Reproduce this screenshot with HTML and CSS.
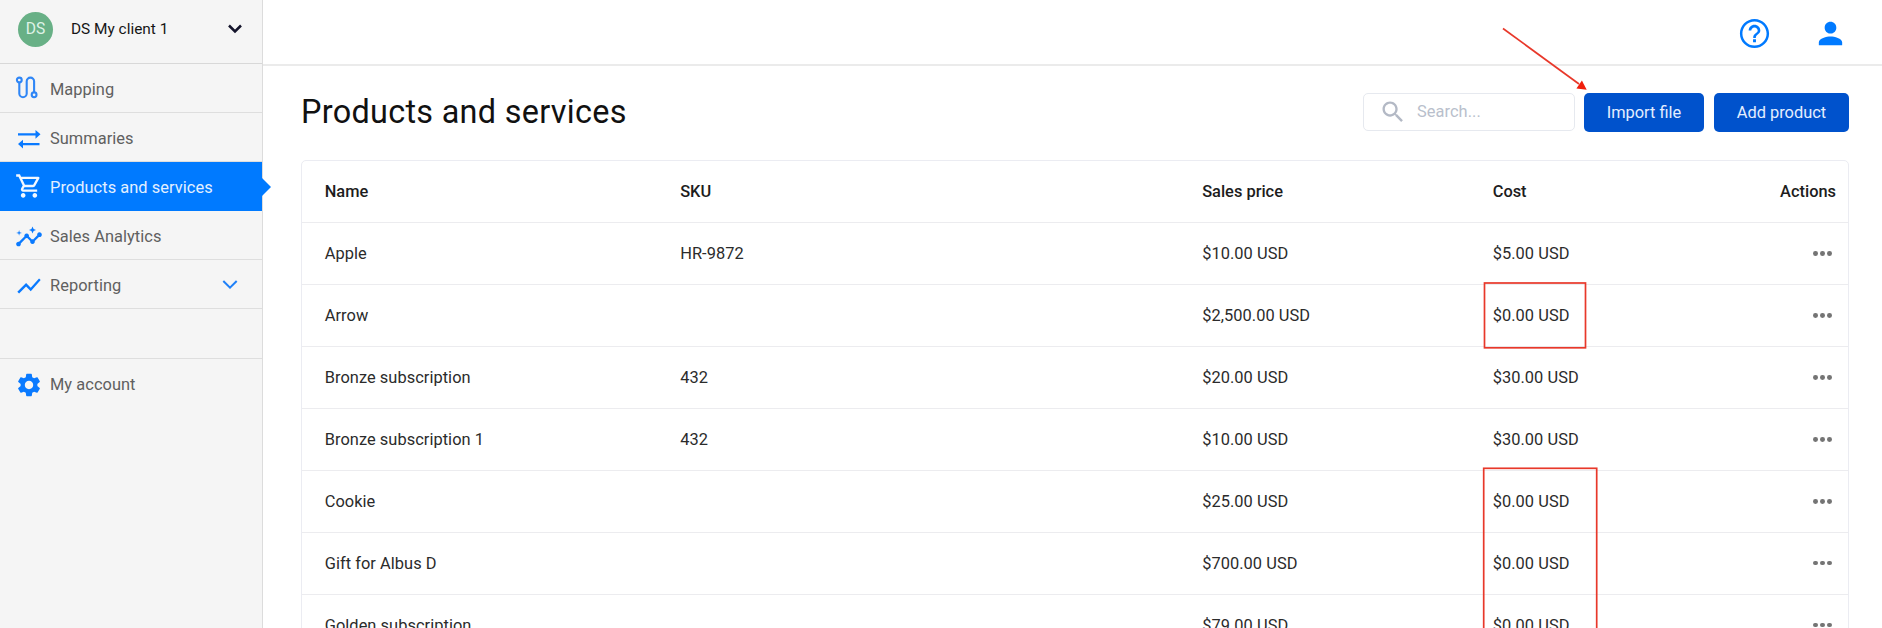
FILE: index.html
```html
<!DOCTYPE html>
<html lang="en">
<head>
<meta charset="utf-8">
<title>Products and services</title>
<link rel="stylesheet" href="styles.css">
</head>
<body>
<div class="app">
  <aside class="sidebar">
    <div class="client">
      <span class="avatar">DS</span>
      <span class="client-name">DS My client 1</span>
      <svg class="client-chevron" viewBox="0 0 16 12"><path d="M2 2.5l6 6 6-6"/></svg>
    </div>
    <nav class="nav">
      <a class="item">
        <svg class="icon line raised" viewBox="0 0 28 28"><circle cx="4.3" cy="6" r="2.4"/><circle cx="19.1" cy="20.8" r="2.4"/><path d="M4.300 8.400V19.500a3.700 3.700 0 0 0 7.400 0V7.300a3.700 3.700 0 0 1 7.400 0v11.100"/></svg>
        <span>Mapping</span>
      </a>
      <a class="item">
        <svg class="icon" viewBox="0 0 28 28"><path d="M3 8.200H20.500V4.900l5 4.400-5 4.400v-3.300H3zM24.500 18H8v-3.300l-5 4.400 5 4.400v-3.300h16.500z"/></svg>
        <span>Summaries</span>
      </a>
      <a class="item active">
        <svg class="icon raised" viewBox="0 0 24 24"><path d="M15.550 13c.75 0 1.410-.41 1.750-1.030l3.580-6.490c.37-.66-.11-1.480-.87-1.480H5.210l-.94-2H1v2h2l3.600 7.590-1.350 2.440C4.520 15.370 5.480 17 7 17h12v-2H7l1.100-2h7.450zM6.160 6h12.150l-2.760 5H8.530L6.160 6zM7 18c-1.100 0-1.990.9-1.990 2S5.900 22 7 22s2-.9 2-2-.9-2-2-2zm10 0c-1.100 0-1.990.9-1.990 2s.89 2 1.990 2 2-.9 2-2-.9-2-2-2z"/></svg>
        <span>Products and services</span>
      </a>
      <a class="item">
        <svg class="icon" viewBox="0 0 24 24"><path d="M21 8c-1.450 0-2.260 1.440-1.930 2.510l-3.550 3.560c-.3-.09-.74-.09-1.040 0l-2.550-2.550C12.270 10.450 11.460 9 10 9c-1.450 0-2.270 1.440-1.930 2.520l-4.560 4.550C2.440 15.740 1 16.550 1 18c0 1.100.9 2 2 2 1.450 0 2.260-1.440 1.930-2.510l4.550-4.560c.3.09.74.09 1.040 0l2.550 2.550C12.730 16.550 13.540 18 15 18c1.450 0 2.270-1.440 1.930-2.520l3.560-3.550C21.560 12.260 23 11.450 23 10c0-1.100-.9-2-2-2z"/><path d="M15 9l.94-2.070L18 6l-2.060-.93L15 3l-.92 2.070L12 6l2.080.93zM3.500 11L4 9l2-.5L4 8l-.5-2L3 8l-2 .5L3 9z"/></svg>
        <span>Sales Analytics</span>
      </a>
      <a class="item">
        <svg class="icon" viewBox="0 0 24 24"><path d="M3.500 18.490l6-6.010 4 4L22 6.920l-1.410-1.410-7.090 7.970-4-4L2 16.990z"/></svg>
        <span>Reporting</span>
        <svg class="chevron" viewBox="0 0 16 12"><path d="M1.300 2l6.700 6.700L14.700 2"/></svg>
      </a>
      <div class="item"></div>
      <a class="item last">
        <svg class="icon" viewBox="0 0 24 24"><path d="M19.140 12.940c.04-.3.060-.61.060-.94 0-.32-.02-.64-.07-.94l2.030-1.580c.18-.14.23-.41.12-.61l-1.920-3.320c-.12-.22-.37-.29-.59-.22l-2.390.96c-.5-.38-1.030-.7-1.620-.94l-.36-2.540c-.04-.24-.24-.41-.48-.41h-3.840c-.24 0-.43.17-.47.41l-.36 2.540c-.59.24-1.130.57-1.620.94l-2.390-.96c-.22-.08-.47 0-.59.22L2.740 8.870c-.12.21-.08.47.12.61l2.030 1.580c-.05.3-.09.63-.09.94s.02.64.07.94l-2.030 1.580c-.18.14-.23.41-.12.61l1.920 3.320c.12.22.37.29.59.22l2.390-.96c.5.38 1.030.7 1.620.94l.36 2.540c.05.24.24.41.48.41h3.840c.24 0 .44-.17.47-.41l.36-2.540c.59-.24 1.130-.56 1.620-.94l2.390.96c.22.08.47 0 .59-.22l1.920-3.320c.12-.22.07-.47-.12-.61l-2.010-1.580zM12 15.600c-1.980 0-3.600-1.620-3.600-3.600s1.620-3.600 3.600-3.600 3.600 1.620 3.600 3.600-1.620 3.600-3.600 3.600z"/></svg>
        <span>My account</span>
      </a>
    </nav>
  </aside>

  <main class="main">
    <header class="topbar">
      <svg class="top-icon" viewBox="0 0 24 24"><path d="M11 18h2v-2h-2v2zm1-16C6.480 2 2 6.480 2 12s4.480 10 10 10 10-4.480 10-10S17.520 2 12 2zm0 18.300c-4.580 0-8.300-3.720-8.300-8.300S7.420 3.700 12 3.700s8.300 3.720 8.300 8.300-3.720 8.300-8.300 8.300zM12 6c-2.210 0-4 1.790-4 4h1.800c0-1.200 1-2.200 2.200-2.200s2.200 1 2.200 2.200c0 2-3.100 1.750-3.100 5h1.800c0-2.250 3.100-2.500 3.100-5 0-2.210-1.790-4-4-4z"/></svg>
      <svg class="top-icon" viewBox="0 0 24 24"><path d="M12 12c2.210 0 4-1.790 4-4s-1.790-4-4-4-4 1.790-4 4 1.790 4 4 4zm0 2c-2.670 0-8 1.340-8 4v2h16v-2c0-2.660-5.330-4-8-4z"/></svg>
    </header>

    <section class="content">
      <div class="heading">
        <h1>Products and services</h1>
        <div class="search">
          <svg viewBox="0 0 24 24"><path d="M15.500 14h-.79l-.28-.27C15.410 12.590 16 11.110 16 9.500 16 5.910 13.090 3 9.500 3S3 5.910 3 9.500 5.910 16 9.500 16c1.610 0 3.090-.59 4.230-1.570l.27.28v.79l5 4.990L20.490 19l-4.990-5zm-6 0C7.010 14 5 11.990 5 9.500S7.010 5 9.500 5 14 7.010 14 9.500 11.990 14 9.500 14z"/></svg>
          <span>Search...</span>
        </div>
        <button class="btn import">Import file</button>
        <button class="btn add">Add product</button>
      </div>

      <div class="table">
        <div class="row head"><span>Name</span><span>SKU</span><span>Sales price</span><span>Cost</span><span class="actions">Actions</span></div>
        <div class="row"><span>Apple</span><span>HR-9872</span><span>$10.00 USD</span><span>$5.00 USD</span><i class="dots"><b></b><b></b><b></b></i></div>
        <div class="row"><span>Arrow</span><span></span><span>$2,500.00 USD</span><span>$0.00 USD</span><i class="dots"><b></b><b></b><b></b></i></div>
        <div class="row"><span>Bronze subscription</span><span>432</span><span>$20.00 USD</span><span>$30.00 USD</span><i class="dots"><b></b><b></b><b></b></i></div>
        <div class="row"><span>Bronze subscription 1</span><span>432</span><span>$10.00 USD</span><span>$30.00 USD</span><i class="dots"><b></b><b></b><b></b></i></div>
        <div class="row"><span>Cookie</span><span></span><span>$25.00 USD</span><span>$0.00 USD</span><i class="dots"><b></b><b></b><b></b></i></div>
        <div class="row"><span>Gift for Albus D</span><span></span><span>$700.00 USD</span><span>$0.00 USD</span><i class="dots"><b></b><b></b><b></b></i></div>
        <div class="row"><span>Golden subscription</span><span></span><span>$79.00 USD</span><span>$0.00 USD</span><i class="dots"><b></b><b></b><b></b></i></div>
      </div>
    </section>
  </main>

  <svg class="annotations" viewBox="0 0 1882 628">
    <path class="mark" d="M1503 28.500L1579 84"/>
    <path class="tip" d="M1586.700 89.700l-10.300-1.200 5.500-8z"/>
    <rect class="mark" x="1484.500" y="283" width="101" height="64.800"/>
    <rect class="mark" x="1483.700" y="468.300" width="113" height="200"/>
  </svg>
</div>
</body>
</html>
```
FILE: styles.css
```css
* { box-sizing: border-box; }

body {
  margin: 0;
  font-family: Roboto, "Liberation Sans", sans-serif;
  font-size: 16.4px;
  letter-spacing: 0.05px;
  color: #2b2b2b;
  background: #fff;
}

.app {
  position: relative;
  display: flex;
  width: 1882px;
  height: 628px;
  overflow: hidden;
}

.sidebar {
  flex: none;
  width: 263px;
  background: #f5f5f5;
  border-right: 1.500px solid #dcdcdc;
}

.client {
  display: flex;
  align-items: center;
  height: 64px;
  padding: 0 19px 5px 18px;
  border-bottom: 1px solid #d8d8d8;
}

.avatar {
  width: 35px;
  height: 35px;
  border-radius: 50%;
  background: #68b086;
  color: #dff3e7;
  font-size: 15.600px;
  line-height: 34px;
  text-align: center;
  letter-spacing: 0;
}

.client-name {
  flex: 1;
  margin-left: 18px;
  font-size: 15.400px;
  letter-spacing: 0;
  color: #151515;
}

.client-chevron { width: 16px; height: 12px; }
.client-chevron path { fill: none; stroke: #14142b; stroke-width: 2.500; }

.item {
  position: relative;
  display: flex;
  align-items: center;
  height: 49.100px;
  padding: 3px 24px 0 15px;
  border-bottom: 1px solid #dedede;
  color: #606060;
}

.item span { flex: 1; margin-left: 7px; }
.last { border-bottom: 0; }

.icon { width: 28px; height: 28px; fill: #0a7aff; }
.icon.raised { margin-top: -3px; }
.icon.line { fill: none; stroke: #2f86f6; stroke-width: 2.100; }

.chevron { width: 16px; height: 12px; margin-top: -2px; }
.chevron path { fill: none; stroke: #1f80f8; stroke-width: 2; }

.active {
  background: #007aff;
  border-color: #007aff;
  color: #e3f0ff;
}
.active .icon { fill: #f2f8ff; }

.active::after {
  content: "";
  position: absolute;
  right: -9px;
  top: 16px;
  border: 9px solid transparent;
  border-left-color: #007aff;
  border-right: 0;
}

.main { flex: 1; min-width: 0; }

.topbar {
  display: flex;
  justify-content: flex-end;
  gap: 41px;
  height: 66px;
  padding: 16px 34px 0 0;
  border-bottom: 2px solid #ebebeb;
}
.top-icon { width: 35px; height: 35px; fill: #007aff; }

.content { padding: 26px 33px 0 38px; }

.heading { display: flex; height: 68px; align-items: flex-start; }

h1 {
  flex: 1;
  margin: 0;
  font-size: 32.400px;
  font-weight: 400;
  letter-spacing: 0.300px;
  line-height: 40px;
  color: #111;
}

.search {
  display: flex;
  align-items: center;
  width: 212px;
  height: 38px;
  margin: 1px 9px 0 0;
  padding: 0 0 1px 15px;
  border: 1px solid #e6e9ef;
  border-radius: 5px;
  color: #b9bfcc;
}
.search svg { width: 28px; height: 28px; fill: #b3b9c5; }
.search span { margin-left: 10px; }

.btn {
  height: 39px;
  margin: 1px 0 0;
  padding: 0 0 1px;
  border: 0;
  border-radius: 5px;
  background: #0052cc;
  color: #e4eeff;
  font: inherit;
  letter-spacing: 0;
}
.import { width: 120px; }
.add { width: 135px; margin-left: 10px; }

.table {
  height: 520px;
  border: 1px solid #ebecf2;
  border-radius: 5px 5px 0 0;
}

.row {
  display: grid;
  grid-template-columns: 355.500px 522px 290.500px 1fr 80px;
  align-items: center;
  height: 61.950px;
  padding: 0 12px 0 22.700px;
  border-bottom: 1px solid #ececef;
}

.head { font-weight: 500; letter-spacing: 0; color: #1d1d1d; }
.actions { text-align: right; }

.dots { display: flex; justify-content: flex-end; gap: 2.300px; padding-right: 4px; }
.dots b { width: 4.800px; height: 4.800px; border-radius: 50%; background: #747474; }

/* Callouts drawn over the page */
.annotations {
  position: absolute;
  inset: 0;
  width: 1882px;
  height: 628px;
  pointer-events: none;
}
.mark { fill: none; stroke: #e8382a; stroke-width: 1.700; }
.tip { fill: #f01e0c; }
```
